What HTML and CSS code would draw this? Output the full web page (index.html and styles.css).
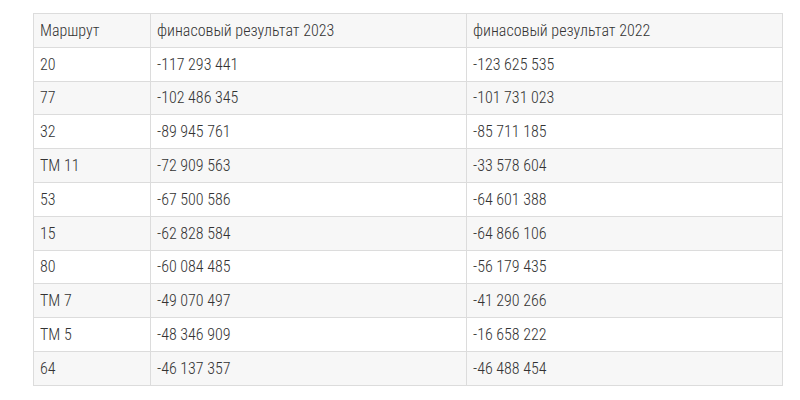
FILE: index.html
```html
<!DOCTYPE html>
<html lang="ru">
<head>
<meta charset="utf-8">
<link rel="stylesheet" href="styles.css">
</head>
<body>
<table class="fin">
  <tr class="head"><td class="c1">Маршрут</td><td>финасовый результат 2023</td><td>финасовый результат 2022</td></tr>
  <tr><td class="c1">20</td><td>-117 293 441</td><td>-123 625 535</td></tr>
  <tr><td class="c1">77</td><td>-102 486 345</td><td>-101 731 023</td></tr>
  <tr><td class="c1">32</td><td>-89 945 761</td><td>-85 711 185</td></tr>
  <tr><td class="c1">ТМ 11</td><td>-72 909 563</td><td>-33 578 604</td></tr>
  <tr><td class="c1">53</td><td>-67 500 586</td><td>-64 601 388</td></tr>
  <tr><td class="c1">15</td><td>-62 828 584</td><td>-64 866 106</td></tr>
  <tr><td class="c1">80</td><td>-60 084 485</td><td>-56 179 435</td></tr>
  <tr><td class="c1">ТМ 7</td><td>-49 070 497</td><td>-41 290 266</td></tr>
  <tr><td class="c1">ТМ 5</td><td>-48 346 909</td><td>-16 658 222</td></tr>
  <tr><td class="c1">64</td><td>-46 137 357</td><td>-46 488 454</td></tr>
</table>
</body>
</html>
```
FILE: styles.css
```css
html, body {
  margin: 0;
  padding: 0;
  background: #fff;
}
body {
  padding: 13px 0 0 33px;
  font-family: "Roboto Condensed", Roboto, "Liberation Sans", sans-serif;
  font-stretch: condensed;
  font-weight: 300;
  font-size: 16px;
  color: #333;
}
.fin {
  border-collapse: collapse;
  width: 750px;
  table-layout: fixed;
}
.fin td {
  border: 1px solid #dcdcdc;
  height: 33.8px;
  padding: 0 6px;
  box-sizing: border-box;
  vertical-align: middle;
  width: 316px;
}
.fin td.c1 {
  width: 117px;
}
.fin tr:nth-child(odd) td {
  background: #f7f7f7;
}
```
